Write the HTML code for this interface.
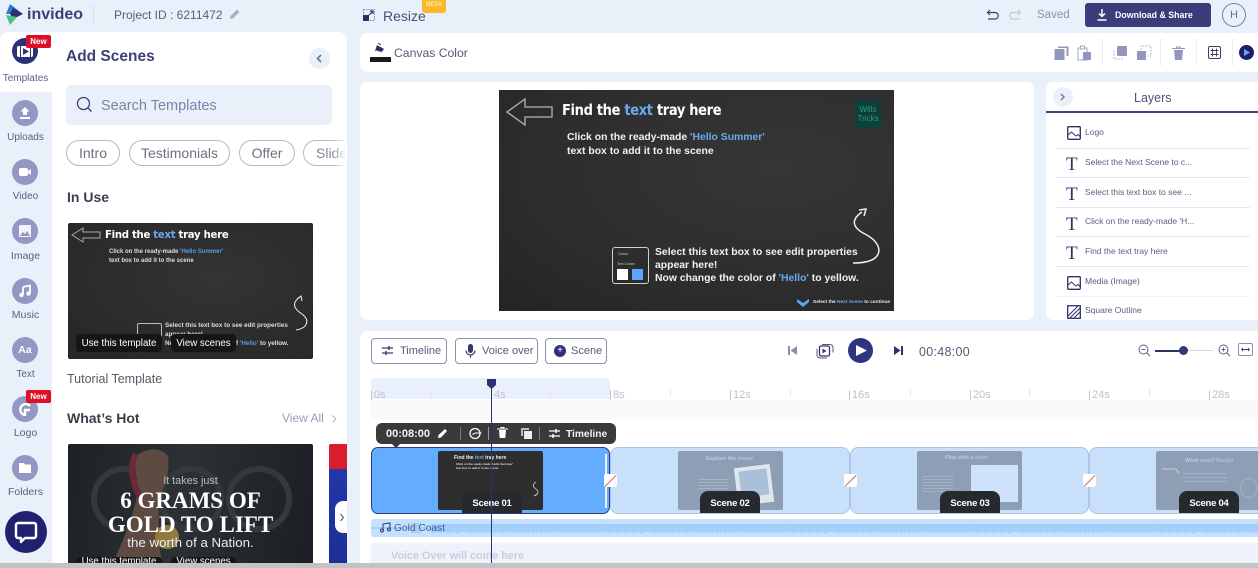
<!DOCTYPE html>
<html><head><meta charset="utf-8">
<style>
*{box-sizing:border-box;margin:0;padding:0}
html,body{width:1258px;height:568px;overflow:hidden;background:#e9f0f9;font-family:"Liberation Sans",sans-serif;color:#4b4f72}
.a{position:absolute}
.t{position:absolute;white-space:nowrap;line-height:1}
.c{position:absolute;width:26px;height:26px;border-radius:50%;background:#9497c4;left:12px}
.l{position:absolute;left:0;width:51px;text-align:center;font-size:10px;color:#5b5f80;line-height:1}
.pill{position:absolute;top:140px;height:26px;border:1px solid #b5b8c4;border-radius:14px;font-size:14px;line-height:25px;text-align:center;color:#6d7080;background:#fff}
.btn{position:absolute;top:338px;height:26px;border:1px solid #8e91a8;border-radius:4px;font-size:11px;line-height:25px;color:#555a78;background:#fff;white-space:nowrap}
.rl{position:absolute;top:390px;font-size:11px;color:#bcc0ce;border-left:1px solid #c3c6d2;padding-left:2px;line-height:10px;height:10px}
.tick{position:absolute;top:389px;width:1px;height:8px;background:#e4e6ec}
.li{position:absolute;left:1085px;font-size:8.500px;color:#5a5e82;white-space:nowrap;line-height:1}
.sep{position:absolute;left:1056px;width:194px;height:1px;background:#e8e9ef}
.T{position:absolute;left:1066px;font-family:"Liberation Serif",serif;font-size:19px;line-height:1;color:#2d3168}
.clip{position:absolute;top:447px;height:67px;background:#c9e0fb;border:1px solid #abc6e4;border-radius:8px}
.th{position:absolute;top:451px;height:59px;width:105px;background:#8e9fb5;border-radius:2px}
.sl{position:absolute;top:491px;width:60px;height:22px;background:#26292e;border-radius:8px 8px 0 0;color:#fff;font-size:9.500px;letter-spacing:-.25px;font-weight:bold;text-align:center;line-height:26px}
.tr{position:absolute;top:474px;width:13px;height:13px;background:#fff;border-radius:2px;overflow:hidden}
.tr:after{content:"";position:absolute;left:6px;top:-1px;width:1px;height:16px;background:#d0705a;transform:rotate(45deg)}
.vs{position:absolute;top:38px;width:1px;height:28px;background:#eceef3}
.b{font-weight:bold;color:#fff;position:absolute;white-space:nowrap;line-height:1}
.u{position:absolute;background:#161616;border-radius:4px;color:#fff;font-size:9.700px;text-align:center}
</style></head><body>

<!-- top bar -->
<svg class="a" style="left:5px;top:3px" width="20" height="24" viewBox="0 0 20 24"><path d="M5 1L18 11 1 11z" fill="#2a7dd6"/><path d="M8 5L18 11 8 16 5 11z" fill="#2c3170"/><path d="M1 12L12 14 5 22z" fill="#4fc08a"/></svg>
<div class="t" style="left:27px;top:7px;font-size:16px;font-weight:bold;color:#3b3f78">invideo</div>
<div class="a" style="left:93px;top:5px;width:1px;height:20px;background:#d8dde6"></div>
<div class="t" style="left:114px;top:9px;font-size:12px;color:#5a5e78">Project ID : 6211472</div>
<svg class="a" style="left:228px;top:8px" width="13" height="13" viewBox="0 0 13 13"><path d="M2 11l.6-3L9 1.600l2.400 2.400L5 10.400z" fill="#a9acc2"/></svg>
<svg class="a" style="left:363px;top:9px" width="12" height="12" viewBox="0 0 12 12"><rect x=".5" y=".5" width="11" height="11" fill="none" stroke="#8a8da8" stroke-dasharray="1.500 1"/><rect x="0" y="6" width="6" height="6" fill="#2d3168"/><path d="M6 6l4-4M7 2h3v3" stroke="#2d3168" fill="none" stroke-width="1.200"/></svg>
<div class="t" style="left:383px;top:9px;font-size:14px;color:#4a4e78">Resize</div>
<div class="a" style="left:422px;top:0;width:24px;height:13px;background:#f9b928;border-radius:0 0 3px 3px;color:#ffe9b0;font-size:6px;font-weight:bold;text-align:center;line-height:11px">BETA</div>

<svg class="a" style="left:986px;top:8px" width="14" height="14" viewBox="0 0 14 14"><path d="M4 2L1.500 4.500 4 7M2 4.500h7a3 3 0 0 1 0 6.500H2" fill="none" stroke="#3b3f6e" stroke-width="1.200"/></svg>
<svg class="a" style="left:1008px;top:8px" width="14" height="14" viewBox="0 0 14 14"><path d="M10 2l2.500 2.500L10 7M12 4.500H5a3 3 0 0 0 0 6.500h7" fill="none" stroke="#c4c8d8" stroke-width="1.200"/></svg>
<div class="t" style="left:1037px;top:10px;font-size:11.500px;color:#8d90ac">Saved</div>
<div class="a" style="left:1085px;top:3px;width:126px;height:24px;background:#3b3d7a;border-radius:3px"></div>
<svg class="a" style="left:1096px;top:8px" width="12" height="14" viewBox="0 0 12 14"><path d="M6 1v7M3 5.500L6 8.500 9 5.500M1.500 12h9" fill="none" stroke="#fff" stroke-width="1.500"/></svg>
<div class="b" style="left:1115px;top:11px;font-size:8.800px">Download &amp; Share</div>
<div class="a" style="left:1222px;top:3px;width:24px;height:24px;border:1px solid #7e82a8;border-radius:50%;font-size:11px;text-align:center;line-height:22px;color:#6c7096">H</div>

<!-- left rail + panel -->
<div class="a" style="left:1px;top:92px;width:51px;height:471px;background:#eaf0fa;border-radius:0 8px 0 0"></div>
<div class="a" style="left:0;top:32px;width:52px;height:60px;background:#fff;border-radius:8px 0 0 0"></div>
<div class="a" style="left:52px;top:32px;width:295px;height:531px;background:#fff;border-radius:0 8px 0 0"></div>

<div class="c" style="top:38px;background:#2d3178"></div>
<div class="a" style="left:17px;top:46px;width:16px;height:11px;background:#fff;border-radius:2px"></div>
<div class="a" style="left:20px;top:46px;width:1px;height:11px;background:#2d3178"></div>
<div class="a" style="left:30px;top:46px;width:1px;height:11px;background:#2d3178"></div>
<svg class="a" style="left:23px;top:48px" width="6" height="7" viewBox="0 0 6 7"><path d="M0 0l6 3.500L0 7z" fill="#2d3178"/></svg>
<div class="a" style="left:26px;top:35px;width:25px;height:13px;background:#dc0f27;border-radius:2px;color:#fff;font-size:8px;font-weight:bold;text-align:center;line-height:13px">New</div>
<div class="l" style="top:74px">Templates</div>

<div class="c" style="top:100px"></div>
<svg class="a" style="left:18px;top:106px" width="14" height="14" viewBox="0 0 14 14"><path d="M7 1L2.500 5.500H5V9h4V5.500h2.500zM2 11h10v2H2z" fill="#fff"/></svg>
<div class="l" style="top:133px">Uploads</div>

<div class="c" style="top:159px"></div>
<svg class="a" style="left:18px;top:166px" width="14" height="12" viewBox="0 0 14 12"><rect x="1" y="2" width="9" height="8" rx="2" fill="#fff"/><path d="M10 5l3-2v6l-3-2z" fill="#fff"/></svg>
<div class="l" style="top:192px">Video</div>

<div class="c" style="top:218px"></div>
<svg class="a" style="left:19px;top:225px" width="12" height="12" viewBox="0 0 12 12"><rect width="12" height="12" rx="1" fill="#f2f3fa"/><path d="M1 11l3-4 2 2 2-3 3 5z" fill="#9497c4"/></svg>
<div class="l" style="top:251px;font-size:10.500px">Image</div>

<div class="c" style="top:278px"></div>
<svg class="a" style="left:18px;top:284px" width="14" height="14" viewBox="0 0 14 14"><path d="M5 3l7-1.500v8" fill="none" stroke="#fff" stroke-width="1.800"/><path d="M5 3v8" stroke="#fff" stroke-width="1.800"/><circle cx="3.500" cy="11" r="2.200" fill="#fff"/><circle cx="10.500" cy="9.500" r="2.200" fill="#fff"/></svg>
<div class="l" style="top:310px;font-size:10.500px">Music</div>

<div class="c" style="top:337px"></div>
<div class="t" style="left:12px;width:26px;text-align:center;top:345px;font-size:10.500px;font-weight:bold;color:#fff">Aa</div>
<div class="l" style="top:370px">Text</div>

<div class="c" style="top:396px"></div>
<svg class="a" style="left:18px;top:403px" width="14" height="13" viewBox="0 0 14 13"><path d="M12 3A5.500 5.500 0 1 0 7 12V7h5" fill="none" stroke="#fff" stroke-width="2.400"/></svg>
<div class="a" style="left:26px;top:390px;width:25px;height:13px;background:#dc0f27;border-radius:2px;color:#fff;font-size:8px;font-weight:bold;text-align:center;line-height:13px">New</div>
<div class="l" style="top:428px;font-size:10.500px">Logo</div>

<div class="c" style="top:455px"></div>
<svg class="a" style="left:18px;top:461px" width="14" height="13" viewBox="0 0 14 13"><path d="M1 2h5l1 1.500h6V12H1z" fill="#fff"/></svg>
<div class="a" style="left:0;top:487px;width:52px;height:8px;overflow:hidden"><div class="l" style="top:0;font-size:10.500px">Folders</div></div>

<div class="a" style="left:5px;top:511px;width:42px;height:42px;background:#202270;border-radius:50%"></div>
<svg class="a" style="left:14px;top:521px" width="24" height="23" viewBox="0 0 24 23"><path d="M4 2h16a2 2 0 0 1 2 2v11a2 2 0 0 1-2 2H11l-4 4v-4H4a2 2 0 0 1-2-2V4a2 2 0 0 1 2-2z" fill="none" stroke="#fff" stroke-width="2.400" stroke-linejoin="round"/></svg>

<div class="t" style="left:66px;top:49px;font-size:15.500px;font-weight:bold;color:#3d4177">Add Scenes</div>
<div class="a" style="left:309px;top:48px;width:21px;height:21px;background:#e9f0f9;border-radius:50%"></div>
<svg class="a" style="left:315px;top:54px" width="9" height="9" viewBox="0 0 9 9"><path d="M6 1L2.500 4.500 6 8" fill="none" stroke="#6d7196" stroke-width="1.600"/></svg>

<div class="a" style="left:66px;top:85px;width:266px;height:40px;background:#e9f0f9;border-radius:5px"></div>
<svg class="a" style="left:76px;top:96px" width="17" height="17" viewBox="0 0 17 17"><circle cx="7.500" cy="7.500" r="6" fill="none" stroke="#3d4177" stroke-width="1.300"/><path d="M12 12l3.500 3.500" stroke="#3d4177" stroke-width="1.300"/></svg>
<div class="t" style="left:101px;top:99px;font-size:14.500px;color:#7e82a6">Search Templates</div>

<div class="pill" style="left:66px;width:54px">Intro</div>
<div class="pill" style="left:129px;width:101px">Testimonials</div>
<div class="pill" style="left:239px;width:56px">Offer</div>
<div class="a" style="left:303px;top:140px;width:44px;height:26px;overflow:hidden"><div style="width:70px;height:26px;border:1px solid #b5b8c4;border-radius:14px;font-size:14px;line-height:25px;padding-left:12px;color:#84879a">Slide</div></div>
<div class="a" style="left:332px;top:140px;width:15px;height:26px;background:linear-gradient(90deg,rgba(255,255,255,0),#fff)"></div>

<div class="t" style="left:67px;top:190px;font-size:14px;font-weight:bold;color:#3b3d4a">In Use</div>

<!-- thumb 1 -->
<div class="a" style="left:68px;top:223px;width:245px;height:136px;background:radial-gradient(ellipse at 60% 40%,#343434,#262626);border-radius:2px;overflow:hidden">
<svg class="a" style="left:3px;top:4px" width="30" height="16" viewBox="0 0 30 16"><path d="M1 8L12 1v4h17v6H12v4z" fill="none" stroke="#aaa" stroke-width="1"/></svg>
<div class="b" style="left:37px;top:6px;font-size:11px;font-family:'DejaVu Sans',sans-serif;letter-spacing:-.3px;transform:scaleX(.92);transform-origin:left">Find the <span style="color:#6aa9ef">text</span> tray here</div>
<div class="b" style="left:41px;top:26px;font-size:6px;color:#ddd">Click on the ready-made <span style="color:#5a9be0">'Hello Summer'</span></div>
<div class="b" style="left:41px;top:35px;font-size:6px;color:#ddd">text box to add it to the scene</div>
<div class="a" style="left:69px;top:100px;width:25px;height:25px;border:1px solid #bbb;border-radius:2px"></div>
<div class="b" style="left:97px;top:100px;font-size:6.300px;color:#ddd">Select this text box to see edit properties</div>
<div class="b" style="left:97px;top:109px;font-size:6.300px;color:#ddd">appear here!</div>
<div class="b" style="left:97px;top:118px;font-size:6.300px;color:#ddd">Now change the color of <span style="color:#5a9be0">'Hello'</span> to yellow.</div>
<svg class="a" style="left:222px;top:72px" width="20" height="38" viewBox="0 0 20 38"><path d="M10 2C1 8 4 14 12 19c8 6 6 14-6 16M7 4l4-3 1 5" fill="none" stroke="#eee" stroke-width="1"/></svg>
</div>
<div class="u" style="left:76px;top:334px;width:86px;height:18px;line-height:20px">Use this template</div>
<div class="u" style="left:171px;top:334px;width:65px;height:18px;line-height:20px">View scenes</div>
<div class="t" style="left:67px;top:373px;font-size:12.500px;color:#555865">Tutorial Template</div>

<div class="t" style="left:67px;top:411px;font-size:14px;font-weight:bold;color:#3b3d4a">What’s Hot</div>
<div class="t" style="left:282px;top:412px;font-size:12px;color:#9a9dba">View All</div>
<svg class="a" style="left:331px;top:414px" width="7" height="10" viewBox="0 0 7 10"><path d="M1.500 1.500L5 5 1.500 8.500" fill="none" stroke="#b0b3c8" stroke-width="1"/></svg>

<!-- thumb 2 -->
<div class="a" style="left:68px;top:444px;width:245px;height:119px;background:linear-gradient(100deg,#1c2126,#2c3136 45%,#1b1f23);border-radius:2px 2px 0 0;overflow:hidden">
<div class="a" style="left:23px;top:22px;width:66px;height:66px;border:6px solid #34393e;border-radius:50%"></div>
<div class="a" style="left:90px;top:22px;width:66px;height:66px;border:6px solid #34393e;border-radius:50%"></div>
<div class="a" style="left:158px;top:22px;width:66px;height:66px;border:6px solid #34393e;border-radius:50%"></div>
<svg class="a" style="left:40px;top:2px" width="110" height="117" viewBox="0 0 110 117"><path d="M5 117C14 95 25 75 30 44L26 12C36 2 52 0 60 10C62 26 58 38 52 48C50 70 50 95 54 117z" fill="#5d4a40"/><path d="M28 8C22 18 22 34 34 54" stroke="#6b2b35" stroke-width="6" fill="none"/><circle cx="59" cy="91" r="12" fill="#8f7a40"/></svg>
<div class="b" style="left:0;width:245px;text-align:center;top:32px;font-size:10.800px;font-weight:normal;color:#bdbdbd">It takes just</div>
<div class="b" style="left:0;width:245px;text-align:center;top:45px;font-size:23px;font-family:'Liberation Serif',serif">6 GRAMS OF</div>
<div class="b" style="left:0;width:245px;text-align:center;top:69px;font-size:23px;font-family:'Liberation Serif',serif">GOLD TO LIFT</div>
<div class="b" style="left:0;width:245px;text-align:center;top:92px;font-size:13.300px;font-weight:normal;color:#eee">the worth of a Nation.</div>
</div>
<div class="u" style="left:76px;top:557px;width:86px;height:6px;border-radius:4px 4px 0 0;line-height:10px;overflow:hidden">Use this template</div>
<div class="u" style="left:171px;top:557px;width:65px;height:6px;border-radius:4px 4px 0 0;line-height:10px;overflow:hidden">View scenes</div>
<div class="a" style="left:329px;top:444px;width:18px;height:119px;background:linear-gradient(#d81e2a 0,#d81e2a 24px,#2137a8 26px,#1c2f96);border-radius:2px 0 0 0"></div>
<div class="a" style="left:335px;top:501px;width:12px;height:32px;background:#fff;border-radius:8px 0 0 8px"></div>
<svg class="a" style="left:339px;top:513px" width="6" height="9" viewBox="0 0 6 9"><path d="M1.500 1L4.500 4.500 1.500 8" fill="none" stroke="#555" stroke-width="1"/></svg>

<!-- toolbar row -->
<div class="a" style="left:360px;top:33px;width:898px;height:39px;background:#fff;border-radius:7px 0 0 7px"></div>
<svg class="a" style="left:370px;top:42px" width="22" height="20" viewBox="0 0 22 20"><path d="M7 3l7 4-3 4-6-2z" fill="#2d3168"/><path d="M8 1l3 2" stroke="#2d3168"/><path d="M6 8.500c1 2 4 2.500 5.500 1.500" fill="#fff" stroke="#fff"/><rect x="0" y="15" width="21" height="5" fill="#1a1a1a"/></svg>
<div class="t" style="left:394px;top:47px;font-size:12.200px;color:#555a76">Canvas Color</div>
<svg class="a" style="left:1054px;top:45px" width="16" height="16" viewBox="0 0 16 16"><rect x="0.500" y="4" width="10" height="11" fill="#9497bc"/><path d="M4 3V1.500h10.500V11H12.500V3z" fill="#9497bc"/></svg>
<svg class="a" style="left:1077px;top:45px" width="15" height="16" viewBox="0 0 15 16"><path d="M1 3h9v12H1z" fill="none" stroke="#a2a5c4"/><rect x="3.500" y="1" width="4" height="3" fill="#fff" stroke="#a2a5c4"/><rect x="6" y="7" width="8" height="8" rx="1" fill="#9497bc"/></svg>
<div class="vs" style="left:1102px"></div>
<svg class="a" style="left:1113px;top:45px" width="16" height="16" viewBox="0 0 16 16"><rect x="4" y="1" width="10" height="10" rx="1" fill="#9497bc"/><path d="M1 6v8h9" fill="none" stroke="#a8abc8" stroke-dasharray="1.500 1.500"/></svg>
<svg class="a" style="left:1136px;top:45px" width="16" height="16" viewBox="0 0 16 16"><rect x="1" y="6" width="9" height="9" fill="#9497bc"/><path d="M5 5V1h10v10h-4" fill="none" stroke="#a8abc8" stroke-dasharray="1.500 1.500"/></svg>
<div class="vs" style="left:1160px"></div>
<svg class="a" style="left:1172px;top:46px" width="13" height="14" viewBox="0 0 13 14"><path d="M0 2.500h13M4.500 2.500V1h4v1.500" stroke="#9497bc" fill="none"/><path d="M2 4h9l-1 10H3z" fill="#9497bc"/></svg>
<div class="vs" style="left:1196px"></div>
<svg class="a" style="left:1208px;top:46px" width="13" height="13" viewBox="0 0 13 13"><rect x=".5" y=".5" width="12" height="12" rx="1.500" fill="none" stroke="#3a3e70"/><path d="M4.500 2.500v8M8.500 2.500v8M2.500 4.500h8M2.500 8.500h8" stroke="#3a3e70" stroke-width=".9"/></svg>
<div class="vs" style="left:1232px"></div>
<div class="a" style="left:1239px;top:45px;width:15px;height:15px;background:#1c1f66;border-radius:50%"></div>
<svg class="a" style="left:1243px;top:48px" width="8" height="9" viewBox="0 0 8 9"><path d="M1 1l6 3.500L1 8z" fill="#6aa4ec"/></svg>

<!-- canvas -->
<div class="a" style="left:360px;top:82px;width:674px;height:238px;background:#fff;border-radius:7px"></div>
<div class="a" style="left:499px;top:90px;width:395px;height:221px;background:radial-gradient(ellipse at 70% 35%,#363636,#2d2d2d 60%,#242424);overflow:hidden">
<svg class="a" style="left:7px;top:8px" width="48" height="28" viewBox="0 0 48 28"><path d="M1 14L19 1v8h27v10H19v8z" fill="none" stroke="#b4b4b4" stroke-width="1.300"/></svg>
<div class="b" style="left:63px;top:13px;font-size:15.500px;font-family:'DejaVu Sans',sans-serif;letter-spacing:-.4px;transform:scaleX(.84);transform-origin:left">Find the <span style="color:#6aa9ef">text</span> tray here</div>
<div class="b" style="left:68px;top:43px;font-size:10.400px;color:#f1f1f1">Click on the ready-made <span style="color:#6aa9ef">'Hello Summer'</span></div>
<div class="b" style="left:68px;top:57px;font-size:10.400px;color:#f1f1f1">text box to add it to the scene</div>
<div class="a" style="left:356px;top:10px;width:26px;height:28px;background:#0e3f3a"></div>
<div class="t" style="left:356px;width:26px;text-align:center;top:15px;font-size:8px;color:#2a9d78;line-height:9px;white-space:normal">Wills<br>Tricks</div>
<div class="a" style="left:113px;top:157px;width:37px;height:37px;border:1.500px solid #d0d0d0;border-radius:3px"></div>
<div class="t" style="left:119px;top:163px;font-size:3.500px;color:#ccc">Colors</div>
<div class="t" style="left:118px;top:173px;font-size:3.500px;color:#ccc">Text Colors</div>
<div class="a" style="left:118px;top:179px;width:11px;height:11px;background:#fff"></div>
<div class="a" style="left:133px;top:179px;width:11px;height:11px;background:#5ea6fa"></div>
<div class="b" style="left:156px;top:158px;font-size:10.400px;color:#f1f1f1">Select this text box to see edit properties</div>
<div class="b" style="left:156px;top:171px;font-size:10.400px;color:#f1f1f1">appear here!</div>
<div class="b" style="left:156px;top:184px;font-size:10.400px;color:#f1f1f1">Now change the color of <span style="color:#6aa9ef">'Hello'</span> to yellow.</div>
<svg class="a" style="left:351px;top:116px" width="36" height="60" viewBox="0 0 36 60"><path d="M12 6C0 14 3 22 15 28c15 8 17 18 10 24C20 56 12 57 3 57M9 4l7-1-2 7" fill="none" stroke="#efefef" stroke-width="1.500"/></svg>
<svg class="a" style="left:298px;top:209px" width="12" height="8" viewBox="0 0 12 8"><path d="M0 0l6 4 6-4v3L6 8 0 3z" fill="#5ea6fa"/></svg>
<div class="b" style="left:314px;top:211px;font-size:4.800px;color:#e8e8e8">Select the <span style="color:#6aa9ef">Next Scene</span> to continue</div>
</div>

<!-- layers -->
<div class="a" style="left:1046px;top:82px;width:212px;height:238px;background:#fff;border-radius:7px 0 0 7px;overflow:hidden"></div>
<div class="a" style="left:1053px;top:87px;width:20px;height:20px;background:#e9f0f9;border-radius:50%"></div>
<svg class="a" style="left:1059px;top:93px" width="8" height="8" viewBox="0 0 8 8"><path d="M2 1l3 3-3 3" fill="none" stroke="#7377a0" stroke-width="1.400"/></svg>
<div class="t" style="left:1134px;top:92px;font-size:12.500px;color:#4e5276">Layers</div>
<div class="a" style="left:1046px;top:111px;width:212px;height:2px;background:#3f4380"></div>
<svg class="a" style="left:1067px;top:126px" width="14" height="14" viewBox="0 0 14 14"><rect x=".7" y=".7" width="12.600" height="12.600" rx="1" fill="none" stroke="#2d3168" stroke-width="1.300"/><path d="M1 9l3.500-3L9 10l2-1.500 2 2" fill="none" stroke="#2d3168"/></svg>
<div class="li" style="top:128px">Logo</div>
<div class="sep" style="top:148px"></div>
<div class="T" style="top:155px">T</div><div class="li" style="top:158px">Select the Next Scene to c...</div>
<div class="sep" style="top:177px"></div>
<div class="T" style="top:185px">T</div><div class="li" style="top:188px">Select this text box to see ...</div>
<div class="sep" style="top:207px"></div>
<div class="T" style="top:215px">T</div><div class="li" style="top:217px">Click on the ready-made 'H...</div>
<div class="sep" style="top:236px"></div>
<div class="T" style="top:244px">T</div><div class="li" style="top:247px">Find the text tray here</div>
<div class="sep" style="top:266px"></div>
<svg class="a" style="left:1067px;top:276px" width="14" height="14" viewBox="0 0 14 14"><rect x=".7" y=".7" width="12.600" height="12.600" rx="1" fill="none" stroke="#2d3168" stroke-width="1.300"/><path d="M1 9l3.500-3L9 10l2-1.500 2 2" fill="none" stroke="#2d3168"/></svg>
<div class="li" style="top:277px">Media (Image)</div>
<div class="sep" style="top:296px;background:#f2f3f6"></div>
<svg class="a" style="left:1067px;top:305px" width="14" height="14" viewBox="0 0 14 14"><rect x=".7" y=".7" width="12.600" height="12.600" fill="none" stroke="#2d3168" stroke-width="1.300"/><path d="M1 11L11 1M3 13L13 3M7 13l6-6" stroke="#2d3168"/></svg>
<div class="li" style="top:306px">Square Outline</div>

<!-- timeline panel -->
<div class="a" style="left:360px;top:331px;width:898px;height:232px;background:#fff;border-radius:7px 0 0 0"></div>
<div class="btn" style="left:371px;width:76px;padding-left:28px">Timeline</div>
<svg class="a" style="left:381px;top:345px" width="13" height="11" viewBox="0 0 13 11"><path d="M1 3h11M1 8h11" stroke="#3a3e70" stroke-width="1.300"/><path d="M8 1v4M5 6v4" stroke="#3a3e70" stroke-width="1.500"/></svg>
<div class="btn" style="left:455px;width:83px;padding-left:26px">Voice over</div>
<svg class="a" style="left:465px;top:344px" width="11" height="14" viewBox="0 0 11 14"><rect x="3" y="0" width="5" height="9" rx="2.500" fill="#33376f"/><path d="M1 6.500a4.500 4.500 0 0 0 9 0M5.500 11v2.500" fill="none" stroke="#33376f" stroke-width="1.200"/></svg>
<div class="btn" style="left:545px;width:62px;padding-left:25px">Scene</div>
<div class="a" style="left:554px;top:345px;width:12px;height:12px;background:#2d3178;border-radius:50%;color:#fff;font-size:10px;line-height:11px;text-align:center">+</div>

<svg class="a" style="left:787px;top:345px" width="11" height="11" viewBox="0 0 11 11"><rect x="1" y="1" width="2" height="9" fill="#8a8da8"/><path d="M10 1v9L3.500 5.500z" fill="#8a8da8"/></svg>
<svg class="a" style="left:816px;top:342px" width="18" height="18" viewBox="0 0 18 18"><rect x="3.500" y="4" width="10" height="10" rx="1.500" fill="none" stroke="#33376f" stroke-width="1.300"/><path d="M6.500 6.500v5l4-2.500z" fill="#33376f"/><path d="M6 2.500h8a3 3 0 0 1 3 3v5M1 7v6a3 3 0 0 0 3 3h7" fill="none" stroke="#55597f"/></svg>
<div class="a" style="left:848px;top:338px;width:25px;height:25px;background:#2f3380;border-radius:50%"></div>
<svg class="a" style="left:855px;top:344px" width="13" height="13" viewBox="0 0 13 13"><path d="M1 1l11 5.500L1 12z" fill="#fff"/></svg>
<svg class="a" style="left:893px;top:345px" width="11" height="11" viewBox="0 0 11 11"><path d="M1 1v9l6.500-4.500z" fill="#2d3168"/><rect x="8" y="1" width="2" height="9" fill="#2d3168"/></svg>
<div class="t" style="left:919px;top:346px;font-size:12.500px;color:#555a76;letter-spacing:.3px">00:48:00</div>

<svg class="a" style="left:1138px;top:344px" width="13" height="13" viewBox="0 0 13 13"><circle cx="5.500" cy="5.500" r="4.500" fill="none" stroke="#5b5f80"/><path d="M3.500 5.500h4M9 9l3 3" stroke="#5b5f80"/></svg>
<div class="a" style="left:1155px;top:350px;width:29px;height:1.500px;background:#2d3168"></div>
<div class="a" style="left:1184px;top:350px;width:29px;height:1px;background:#d4d6e2"></div>
<div class="a" style="left:1179px;top:346px;width:9px;height:9px;background:#333878;border-radius:50%"></div>
<svg class="a" style="left:1218px;top:344px" width="13" height="13" viewBox="0 0 13 13"><circle cx="5.500" cy="5.500" r="4.500" fill="none" stroke="#5b5f80"/><path d="M3.500 5.500h4M5.500 3.500v4M9 9l3 3" stroke="#5b5f80"/></svg>
<div class="a" style="left:1238px;top:343px;width:15px;height:13px;border:1px solid #8a8da8;border-radius:2px"></div>
<svg class="a" style="left:1241px;top:347px" width="9" height="5" viewBox="0 0 9 5"><path d="M0 2.500l2-2v4zM9 2.500l-2-2v4zM2 2h5v1H2z" fill="#3a3e70"/></svg>

<!-- ruler -->
<div class="a" style="left:371px;top:378px;width:239px;height:21px;background:#e9f0fb;border-radius:4px 4px 0 0"></div>
<div class="a" style="left:371px;top:400px;width:887px;height:19px;background:#fafafa"></div>
<div class="rl" style="left:371px">0s</div><div class="tick" style="left:431px"></div>
<div class="rl" style="left:491px">4s</div><div class="tick" style="left:550px"></div>
<div class="rl" style="left:610px">8s</div><div class="tick" style="left:670px"></div>
<div class="rl" style="left:730px">12s</div><div class="tick" style="left:790px"></div>
<div class="rl" style="left:849px">16s</div><div class="tick" style="left:910px"></div>
<div class="rl" style="left:970px">20s</div><div class="tick" style="left:1029px"></div>
<div class="rl" style="left:1089px">24s</div><div class="tick" style="left:1149px"></div>
<div class="rl" style="left:1209px">28s</div>

<!-- scene toolbar -->
<div class="a" style="left:376px;top:423px;width:240px;height:21px;background:#3a3a3a;border-radius:6px"></div>
<div class="a" style="left:392px;top:444px;width:0;height:0;border:4px solid transparent;border-top-color:#3a3a3a;border-bottom:0"></div>
<div class="b" style="left:386px;top:429px;font-size:11px;font-weight:bold;color:#f2f2f2">00:08:00</div>
<svg class="a" style="left:437px;top:428px" width="11" height="11" viewBox="0 0 11 11"><path d="M1 10l.5-3L8 1l2 2-6 6.500z" fill="#fff"/></svg>
<div class="a" style="left:460px;top:427px;width:1px;height:13px;background:#777"></div>
<svg class="a" style="left:469px;top:427px" width="13" height="13" viewBox="0 0 13 13"><circle cx="6" cy="6.500" r="5" fill="none" stroke="#fff" stroke-width="1.300"/><path d="M3.500 7.500L6.500 6h6" fill="none" stroke="#fff"/></svg>
<div class="a" style="left:488px;top:427px;width:1px;height:13px;background:#999"></div>
<svg class="a" style="left:497px;top:427px" width="11" height="12" viewBox="0 0 11 12"><path d="M0 2h11M4 2V.5h3V2" stroke="#fff" fill="none"/><path d="M2 3h7l-.7 8H2.700z" fill="#fff"/></svg>
<svg class="a" style="left:521px;top:428px" width="11" height="11" viewBox="0 0 11 11"><path d="M0 0h8v2H2v6H0z" fill="#bbb"/><rect x="3" y="3" width="8" height="8" fill="#eee"/></svg>
<div class="a" style="left:539px;top:427px;width:1px;height:13px;background:#777"></div>
<svg class="a" style="left:548px;top:428px" width="13" height="11" viewBox="0 0 13 11"><path d="M1 3h11M1 8h11" stroke="#fff" stroke-width="1.300"/><path d="M8 1v4M5 6v4" stroke="#fff" stroke-width="1.500"/></svg>
<div class="b" style="left:566px;top:430px;font-size:10.200px;color:#f2f2f2">Timeline</div>

<!-- clips -->
<div class="clip" style="left:610px;width:240px"></div>
<div class="clip" style="left:850px;width:239px"></div>
<div class="clip" style="left:1089px;width:175px"></div>
<div class="a" style="left:371px;top:447px;width:239px;height:67px;background:#64adfe;border:1.500px solid #2d3a80;border-radius:7px"></div>
<div class="a" style="left:605px;top:454px;width:2px;height:54px;background:#eaf4ff"></div>

<div class="th" style="left:438px;background:#2e2e2e">
<div class="b" style="left:16px;top:5px;font-size:5px;color:#eee">Find the <span style="color:#6aa9ef">text</span> tray here</div>
<div class="b" style="left:18px;top:12px;font-size:3px;color:#ddd">Click on the ready-made 'Hello Summer'</div>
<div class="b" style="left:18px;top:16px;font-size:3px;color:#ddd">text box to add it to the scene</div>
<svg class="a" style="left:94px;top:30px" width="8" height="16" viewBox="0 0 8 16"><path d="M4 1C0 4 1 6 4 8c3 2 3 5-2 7" fill="none" stroke="#eee" stroke-width=".7"/></svg>
</div>
<div class="th" style="left:678px">
<div class="b" style="left:28px;top:6px;font-size:5.500px;color:#c8d4e4;opacity:.8">Explore the <span style="color:#b4ccf0">image</span></div>
<div class="a" style="left:58px;top:15px;width:36px;height:38px;background:#dfe6ee;transform:rotate(-7deg)"></div>
<div class="a" style="left:62px;top:19px;width:28px;height:26px;background:#a9c0d8;transform:rotate(-7deg)"></div>
<div class="a" style="left:20px;top:28px;width:30px;height:10px;background:repeating-linear-gradient(#a4b4c8 0,#a4b4c8 1px,transparent 1px,transparent 3px)"></div>
</div>
<div class="th" style="left:917px">
<div class="b" style="left:28px;top:5px;font-size:5.500px;color:#c8d4e4;opacity:.8">Play with a <span style="color:#b4ccf0">color</span></div>
<div class="a" style="left:54px;top:14px;width:47px;height:37px;background:#cfe2fb"></div>
<div class="a" style="left:6px;top:25px;width:30px;height:16px;background:repeating-linear-gradient(#a4b4c8 0,#a4b4c8 1px,transparent 1px,transparent 3px)"></div>
</div>
<div class="th" style="left:1156px;width:102px;border-radius:2px 0 0 2px">
<div class="b" style="left:29px;top:8px;font-size:5.500px;color:#c8d4e4;opacity:.8">What next? <span style="color:#b4ccf0">Music!</span></div>
<div class="a" style="left:27px;top:22px;width:44px;height:12px;background:repeating-linear-gradient(#a4b4c8 0,#a4b4c8 1px,transparent 1px,transparent 4px)"></div>
<div class="a" style="left:84px;top:27px;width:18px;height:20px;border:1px solid #a4b4c8;border-radius:50%"></div>
<svg class="a" style="left:5px;top:15px" width="20" height="10" viewBox="0 0 20 10"><path d="M1 3h14l3 4" fill="none" stroke="#d8e0ea" stroke-width=".8"/></svg>
</div>

<div class="sl" style="left:462px">Scene 01</div>
<div class="sl" style="left:700px">Scene 02</div>
<div class="sl" style="left:940px">Scene 03</div>
<div class="sl" style="left:1179px">Scene 04</div>
<div class="tr" style="left:604px"></div>
<div class="tr" style="left:844px"></div>
<div class="tr" style="left:1083px"></div>

<!-- audio -->
<div class="a" style="left:371px;top:519px;width:887px;height:18px;background:#c6e1fe;border-radius:3px 0 0 3px"></div>
<svg class="a" style="left:371px;top:519px" width="887" height="18" viewBox="0 0 887 18">
<defs><pattern id="w" width="46" height="18" patternUnits="userSpaceOnUse"><path d="M0 9L2 4 4 12 6 3 8 14 10 5 12 12 14 3 16 15 18 4 20 13 22 5 24 14 26 3 28 12 30 6 32 14 34 4 36 13 38 3 40 14 42 5 44 13 46 9 46 11 44 14 42 13 40 15 38 13 36 14 34 13 32 15 30 12 28 14 26 13 24 15 22 12 20 14 18 13 16 15 14 13 12 14 10 13 8 15 6 13 4 14 2 12 0 11z" fill="#a4d0fc"/></pattern></defs>
<rect x="60" y="5" width="827" height="8" fill="#a0cefc"/>
<rect x="60" y="0" width="827" height="18" fill="url(#w)"/>
<rect x="0" y="8" width="60" height="2" fill="#a4d0fc"/>
<rect x="40" y="4" width="10" height="10" fill="#a4d0fc"/>
</svg>
<svg class="a" style="left:380px;top:522px" width="11" height="11" viewBox="0 0 11 11"><path d="M3 8.500V2L10 1v6.500" fill="none" stroke="#33376f"/><circle cx="2" cy="8.500" r="1.500" fill="none" stroke="#33376f"/><circle cx="9" cy="7.500" r="1.500" fill="none" stroke="#33376f"/></svg>
<div class="t" style="left:394px;top:524px;font-size:10.200px;color:#3f5a9a">Gold Coast</div>

<div class="a" style="left:371px;top:543px;width:887px;height:20px;background:#eef3fb;border-radius:3px 0 0 0"></div>
<div class="t" style="left:391px;top:551px;font-size:10.800px;font-weight:bold;color:#c8cce2">Voice Over will come here</div>

<!-- playhead -->
<div class="a" style="left:491px;top:380px;width:1px;height:184px;background:#2d3178"></div>
<svg class="a" style="left:487px;top:379px" width="9" height="10" viewBox="0 0 9 10"><path d="M0 0h9v6L4.500 10 0 6z" fill="#2d3178"/></svg>

<!-- bottom strip -->
<div class="a" style="left:0;top:563px;width:1258px;height:5px;background:#c3c3c3"></div>
</body></html>
